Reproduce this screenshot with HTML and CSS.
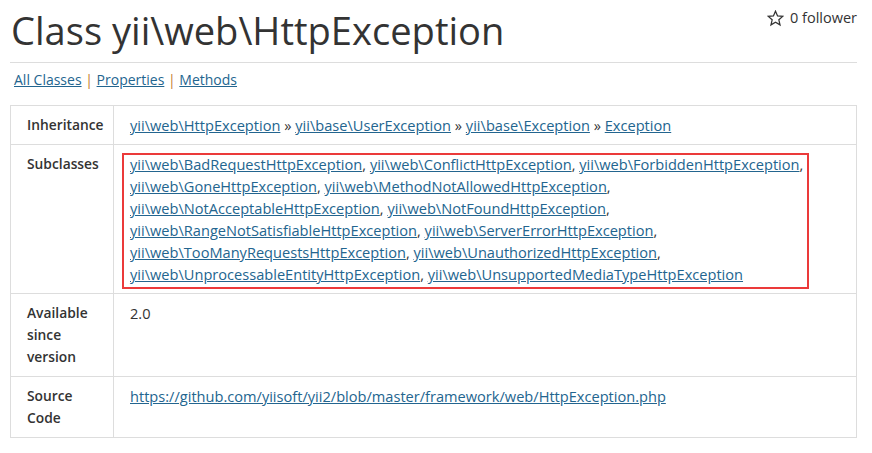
FILE: index.html
```html
<!DOCTYPE html>
<html>
<head>
<meta charset="utf-8">
<link rel="stylesheet" href="styles.css">
</head>
<body>
<div class="page">
  <div class="header">
    <h1 class="title">Class yii\web\HttpException</h1>
    <div class="follow">
      <svg class="star" width="17" height="17" viewBox="0 0 16 16"><path d="M8 1.1 L9.95 5.55 L14.8 6 L11.15 9.25 L12.25 14 L8 11.5 L3.75 14 L4.85 9.25 L1.2 6 L6.05 5.55 Z" fill="none" stroke="#333" stroke-width="1.2" stroke-linejoin="miter"/></svg>
      <span>0 follower</span>
    </div>
  </div>
  <div class="nav">
    <a href="#">All Classes</a> <span class="sep">|</span> <a href="#">Properties</a> <span class="sep">|</span> <a href="#">Methods</a>
  </div>
  <table class="info">
    <tr>
      <th>Inheritance</th>
      <td><a href="#">yii\web\HttpException</a> » <a href="#">yii\base\UserException</a> » <a href="#">yii\base\Exception</a> » <a href="#">Exception</a></td>
    </tr>
    <tr>
      <th>Subclasses</th>
      <td>
        <div class="highlight">
          <div class="highlight-inner">
            <a href="#">yii\web\BadRequestHttpException</a>, <a href="#">yii\web\ConflictHttpException</a>, <a href="#">yii\web\ForbiddenHttpException</a>,<br>
            <a href="#">yii\web\GoneHttpException</a>, <a href="#">yii\web\MethodNotAllowedHttpException</a>,<br>
            <a href="#">yii\web\NotAcceptableHttpException</a>, <a href="#">yii\web\NotFoundHttpException</a>,<br>
            <a href="#">yii\web\RangeNotSatisfiableHttpException</a>, <a href="#">yii\web\ServerErrorHttpException</a>,<br>
            <a href="#">yii\web\TooManyRequestsHttpException</a>, <a href="#">yii\web\UnauthorizedHttpException</a>,<br>
            <a href="#">yii\web\UnprocessableEntityHttpException</a>, <a href="#">yii\web\UnsupportedMediaTypeHttpException</a>
          </div>
        </div>
      </td>
    </tr>
    <tr>
      <th>Available<br>since<br>version</th>
      <td>2.0</td>
    </tr>
    <tr>
      <th>Source<br>Code</th>
      <td><a href="#">https://github.com/yiisoft/yii2/blob/master/framework/web/HttpException.php</a></td>
    </tr>
  </table>
</div>
</body>
</html>
```
FILE: styles.css
```css
html, body {
  margin: 0;
  padding: 0;
  background: #fff;
}
body {
  font-family: "Open Sans", "Noto Sans", sans-serif;
  font-size: 14.6px;
  line-height: 22px;
  color: #333;
}
.page {
  padding: 0 15px 0 10px;
}
.header {
  display: flex;
  justify-content: space-between;
  align-items: flex-start;
  border-bottom: 1px solid #ddd;
  height: 62px;
}
.title {
  margin: 0;
  padding-top: 3px;
  padding-left: 1px;
  font-size: 38.1px;
  font-weight: 400;
  line-height: 54px;
  letter-spacing: 0;
  color: #333;
}
.follow {
  display: flex;
  align-items: center;
  gap: 6px;
  margin-top: 7px;
  font-size: 14.5px;
  color: #333;
}
.star {
  display: block;
}
a {
  color: #23658f;
  text-decoration: underline;
}
.nav {
  padding: 6px 0 0 4px;
  font-size: 14px;
  line-height: 22px;
}
.sep {
  color: #c47a2c;
}
.info {
  margin-top: 14px;
  width: 100%;
  border-collapse: collapse;
  border: 1px solid #ddd;
}
.info th, .info td {
  border: 1px solid #ddd;
  padding: 8px 16px 8px;
  vertical-align: top;
  text-align: left;
}
.info th {
  width: 78px;
  padding: 8px 8px 8px 16px;
  font-weight: 600;
  font-size: 13.8px;
  color: #333;
}
.highlight {
  width: fit-content;
  border: 2px solid #eb3a3a;
  padding: 0 4px 2px 6px;
  margin: 0 0 -4px -8px;
}
.highlight-inner {
  margin-top: -2px;
}
```
